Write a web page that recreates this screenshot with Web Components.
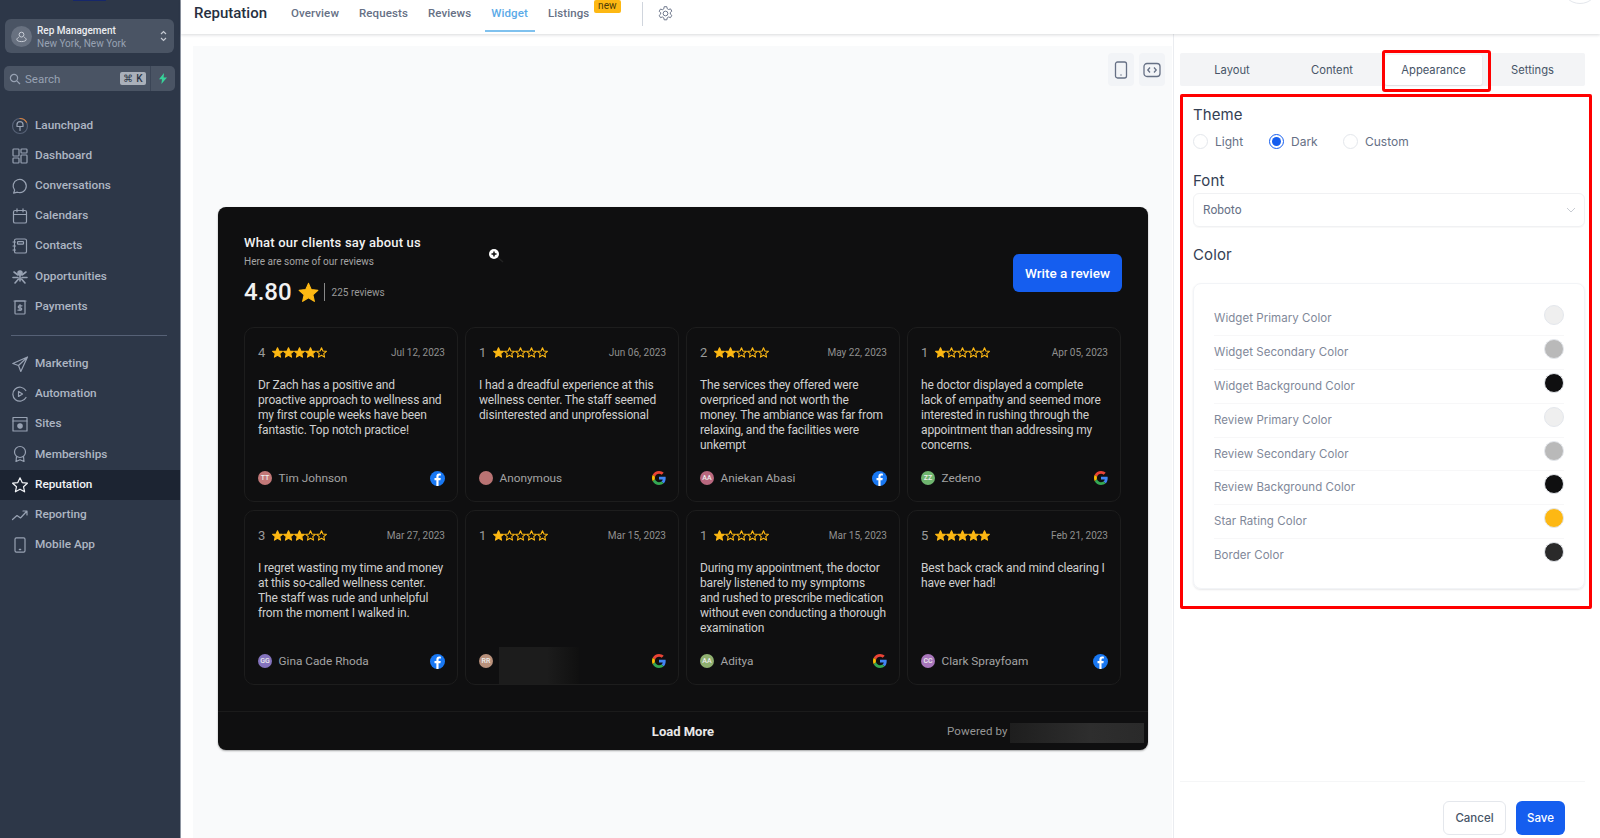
<!DOCTYPE html>
<html>
<head>
<meta charset="utf-8">
<title>Reputation</title>
<style>
  html, body { margin: 0; height: 100%; overflow: hidden; background: #fff; }
  body { font-family: Roboto, "Liberation Sans", sans-serif; }
</style>
</head>
<body>
<rep-app></rep-app>
<script>
const ICONS = {
  launchpad: '<circle cx="9" cy="9" r="7.5" stroke="#566176"/><path d="M9 1.5a7.5 7.5 0 0 1 6.5 3.7" stroke="#d9803c"/><path d="M6 9.5V7.6a3 3 0 0 1 6 0v1.9zM9 9.5v4" />',
  dashboard: '<rect x="2" y="2" width="6" height="7" rx=".8"/><rect x="10" y="2" width="6" height="4" rx=".8"/><rect x="2" y="11" width="6" height="5" rx=".8"/><rect x="10" y="8" width="6" height="8" rx=".8" />',
  chat: '<path d="M3.6 13.2A6.6 6.6 0 1 1 6.4 15.2L2.6 16.2z"/>',
  calendar: '<rect x="2.5" y="3.5" width="13" height="12.5" rx="1.6"/><path d="M2.5 7.5h13M6 1.8v3M12 1.8v3"/>',
  contacts: '<rect x="3.5" y="2" width="12" height="14" rx="1.6"/><rect x="6.5" y="4.6" width="6" height="2.6" rx=".6"/><path d="M2 5h2.5M2 9h2.5M2 13h2.5"/>',
  opportunities: '<circle cx="9" cy="5" r="2.2" fill="currentColor"/><path d="M9 7v6M3 4l4 3M15 4l-4 3M2 9.5h5M16 9.5h-5M4 15l3.5-4M14 15l-3.500-4" stroke-width="1.6"/>',
  payments: '<rect x="4" y="3" width="10" height="13" rx=".8"/><path d="M3 3h12M9 6.500v6M11 7.800H8a1.200 1.200 0 0 0 0 2.200h2a1.200 1.200 0 0 1 0 2.200H7"/>',
  marketing: '<path d="M16.500 2 1.800 8.500l5.700 2 2.300 6zM7.500 10.500 16.500 2"/>',
  automation: '<path d="M14.800 5.500A7 7 0 1 0 15 12.500"/><path d="M7.500 6.500v5l4-2.500z"/>',
  sites: '<rect x="2" y="2.500" width="14" height="13.500"/><path d="M2 6h14"/><circle cx="9" cy="11" r="2.200" fill="currentColor"/>',
  memberships: '<circle cx="9" cy="7" r="5.500"/><path d="M5.500 11.500 5 16.500l4-1.800 4 1.800-.5-5"/>',
  star: '<path d="M9 1.800 11.200 6.600l5.200.6-3.900 3.500 1.100 5.100L9 13.200l-4.600 2.600 1.100-5.100-3.900-3.500 5.200-.6z"/>',
  reporting: '<path d="M1.500 13.500 6 9.500 9.500 12 15.500 5.500M12 5h4v4"/>',
  mobile: '<rect x="4" y="1.800" width="10" height="14.400" rx="1.400"/><path d="M8.500 13.500h1" stroke-width="1.600"/>'
};

function svgIcon(name, size) {
  return `<svg width="${size}" height="${size}" viewBox="0 0 18 18" fill="none" stroke="currentColor" stroke-width="1.2" stroke-linecap="round" stroke-linejoin="round">${ICONS[name]}</svg>`;
}

class NavItem extends HTMLElement {
  connectedCallback() {
    const active = this.hasAttribute('active');
    this.attachShadow({ mode: 'open' }).innerHTML = `
      <style>
        :host { display: flex; align-items: center; height: 30.2px; padding-left: 11px; gap: 6px;
          color: ${active ? '#f2f4f7' : '#aeb6c3'}; background: ${active ? '#1c2432' : 'transparent'};
          font: 500 11.8px/1 Roboto, sans-serif; }
        svg { flex: none; color: ${active ? '#f2f4f7' : '#98a2b3'}; }
      </style>
      ${svgIcon(this.getAttribute('icon'), 18)}<slot></slot>`;
  }
}
customElements.define('nav-item', NavItem);

class RepSidebar extends HTMLElement {
  connectedCallback() {
    this.attachShadow({ mode: 'open' }).innerHTML = `
      <style>
        :host { display: flex; flex-direction: column; width: 181px; flex: none; background: #2d3748;
          border-right: 1px solid #8e95a1; box-sizing: border-box; position: relative; color: #fff; }
        .sliver { position: absolute; left: 73px; top: 0; width: 33px; height: 1px; background: #16276b; }
        .loc { margin: 19px 6px 0 5px; height: 34px; border-radius: 6px; background: #4a5464; display: flex; align-items: center; padding: 0 6px; gap: 5px; }
        .loc-av { width: 21px; height: 21px; border-radius: 50%; background: #687180; display: grid; place-items: center; flex: none; color: #d0d5dd; }
        .loc-txt { flex: 1; font-size: 10px; line-height: 13px; padding-top: 2px; }
        .loc-txt b { display: block; font-weight: 500; color: #eaecf0; }
        .loc-txt span { color: #98a2b3; }
        .search-row { display: flex; margin: 13px 5px 0 4px; height: 25px; }
        .search { flex: 1; background: #4a5464; border-radius: 5px 0 0 5px; display: flex; align-items: center; padding: 0 4px 0 5px; gap: 4px; color: #98a2b3; font-size: 11.5px; }
        .search span { flex: 1; }
        .kbd { background: #aab0ba; color: #2d3748; border-radius: 2px; font-size: 10px; font-weight: 500; padding: 1px 3px; height: 11px; line-height: 11px; letter-spacing: .5px; }
        .spark { width: 25px; background: #4a5464; border-radius: 0 5px 5px 0; border-left: 1px solid #3b4556; box-sizing: border-box; display: grid; place-items: center; }
        nav { margin-top: 19.5px; }
        hr { margin: 13px 13px 13px 11px; border: 0; border-top: 1px solid #566176; }
      </style>
      <div class="sliver"></div>
      <div class="loc">
        <div class="loc-av"><svg width="13" height="13" viewBox="0 0 14 14" fill="none" stroke="currentColor" stroke-width="1"><circle cx="7" cy="5" r="2.600"/><path d="M4 7.800C2.600 8.500 2 9.500 2 10.500c0 1 2.200 2 5 2s5-1 5-2c0-1-.6-2-2-2.700"/></svg></div>
        <div class="loc-txt"><b>Rep Management</b><span>New York, New York</span></div>
        <svg width="9" height="14" viewBox="0 0 9 14" fill="none" stroke="#c5cad3" stroke-width="1.200"><path d="M2 5l2.500-2.500L7 5M2 9l2.500 2.500L7 9"/></svg>
      </div>
      <div class="search-row">
        <div class="search">
          <svg width="12" height="12" viewBox="0 0 12 12" fill="none" stroke="currentColor" stroke-width="1.200"><circle cx="5" cy="5" r="3.600"/><path d="M7.800 7.800 11 11"/></svg>
          <span>Search</span><div class="kbd">⌘ K</div>
        </div>
        <div class="spark"><svg width="10" height="11" viewBox="0 0 10 11"><path d="M6 0 1 6.200h3L3.400 11 9 4.500H5.600z" fill="#37d39a"/></svg></div>
      </div>
      <nav>
        <nav-item icon="launchpad">Launchpad</nav-item>
        <nav-item icon="dashboard">Dashboard</nav-item>
        <nav-item icon="chat">Conversations</nav-item>
        <nav-item icon="calendar">Calendars</nav-item>
        <nav-item icon="contacts">Contacts</nav-item>
        <nav-item icon="opportunities">Opportunities</nav-item>
        <nav-item icon="payments">Payments</nav-item>
        <hr>
        <nav-item icon="marketing">Marketing</nav-item>
        <nav-item icon="automation">Automation</nav-item>
        <nav-item icon="sites">Sites</nav-item>
        <nav-item icon="memberships">Memberships</nav-item>
        <nav-item icon="star" active>Reputation</nav-item>
        <nav-item icon="reporting">Reporting</nav-item>
        <nav-item icon="mobile">Mobile App</nav-item>
      </nav>`;
  }
}
customElements.define('rep-sidebar', RepSidebar);

class TopBar extends HTMLElement {
  connectedCallback() {
    this.attachShadow({ mode: 'open' }).innerHTML = `
      <style>
        :host { display: flex; align-items: flex-start; height: 34px; flex: none; background: #fff; position: relative;
          box-shadow: 0 1px 3px rgba(16,24,40,.16); padding-left: 13px; box-sizing: border-box; z-index: 2; }
        h1 { margin: 4px 0 0; font: 500 15px/18px Roboto, sans-serif; color: #27303f; width: 77px; }
        a { position: relative; font: 500 11.5px/14px Roboto, sans-serif; color: #667085; padding-top: 6px; height: 25px; margin-left: 20px; letter-spacing: .1px; }
        a.on { color: #5aaae8; }
        a.on::after { content: ''; position: absolute; left: -6px; right: -7px; bottom: -1px; height: 2px; background: #7fc1ee; }
        .badge { position: absolute; left: 46px; top: 0; width: 27px; height: 13px; border-radius: 2px; background: #fdb813; color: #4a3a08; font: 400 10px/11px Roboto, sans-serif; text-align: center; }
        .sep { width: 1px; height: 24px; background: #d0d5dd; margin: 2px 0 0 53px; }
        svg { margin: 5px 0 0 14px; color: #667085; }
        .me { position: absolute; right: 1px; top: -34px; width: 38px; height: 38px; border-radius: 50%; border: 1px solid #e4e7ec; background: #fff; box-sizing: border-box; }
      </style>
      <h1>Reputation</h1>
      <a>Overview</a><a>Requests</a><a>Reviews</a><a class="on">Widget</a>
      <a>Listings<span class="badge">new</span></a>
      <div class="sep"></div>
      <svg width="17" height="17" viewBox="0 0 18 18" fill="none" stroke="currentColor" stroke-width="1"><circle cx="9" cy="9" r="2.500"/><path d="M7.600 1.800h2.800l.4 2.100 1.500.9 2-.7 1.400 2.400-1.600 1.400v1.700l1.600 1.400-1.400 2.400-2-.7-1.500.9-.4 2.100H7.600l-.4-2.100-1.500-.9-2 .7-1.400-2.400 1.600-1.400V8.100L2.300 6.700l1.400-2.400 2 .7 1.500-.9z" stroke-linejoin="round"/></svg>
      <div class="me"></div>`;
  }
}
customElements.define('top-bar', TopBar);

class StarRating extends HTMLElement {
  connectedCallback() {
    const n = +this.getAttribute('value');
    let stars = '';
    for (let i = 0; i < 5; i++) {
      const fill = i < n ? '#fdb813' : 'none';
      stars += `<svg width="11" height="11" viewBox="0 0 18 18"><path d="M9 1.200 11.300 6.500l5.700.6-4.300 3.800 1.300 5.700L9 13.600l-5 3 1.300-5.700L1 7.100l5.700-.6z" fill="${fill}" stroke="#fdb813" stroke-width="1.800" stroke-linejoin="round"/></svg>`;
    }
    this.attachShadow({ mode: 'open' }).innerHTML = `
      <style>:host { display: inline-flex; width: 54px; } svg { flex: none; }</style>${stars}`;
  }
}
customElements.define('star-rating', StarRating);

const FB = '<svg width="15" height="15" viewBox="0 0 16 16"><circle cx="8" cy="8" r="8" fill="#1877f2"/><path d="M9.100 16V9.900h2l.4-2.400H9.100V6.100c0-.7.3-1.200 1.300-1.200h1.200V2.800c-.5-.1-1.100-.2-1.800-.2-1.900 0-3 1.100-3 3.100v1.800h-2v2.400h2V16z" fill="#fff"/></svg>';
const GOOGLE = '<svg width="14" height="14" viewBox="0 0 48 48"><path fill="#ea4335" d="M24 9.500c3.500 0 6.700 1.200 9.200 3.600l6.900-6.900C35.900 2.400 30.500 0 24 0 14.600 0 6.500 5.400 2.600 13.200l8 6.200C12.500 13.700 17.800 9.500 24 9.500z"/><path fill="#4285f4" d="M46.900 24.500c0-1.600-.1-3.100-.4-4.500H24v9h12.900c-.6 3-2.200 5.500-4.700 7.200l7.700 6c4.500-4.200 7-10.300 7-17.700z"/><path fill="#fbbc05" d="M10.500 28.600c-.5-1.400-.8-3-.8-4.600s.3-3.200.8-4.600l-8-6.200C.9 16.500 0 20.100 0 24s.9 7.500 2.600 10.800z"/><path fill="#34a853" d="M24 48c6.500 0 11.900-2.100 15.900-5.800l-7.700-6c-2.200 1.400-4.900 2.300-8.200 2.300-6.200 0-11.500-4.200-13.400-9.900l-8 6.200C6.500 42.600 14.600 48 24 48z"/></svg>';

class ReviewCard extends HTMLElement {
  connectedCallback() {
    const a = (k) => this.getAttribute(k) || '';
    const name = a('redacted') ? '<div class="redact"></div>' : `<span class="name">${a('name')}</span>`;
    this.attachShadow({ mode: 'open' }).innerHTML = `
      <style>
        :host { display: flex; flex-direction: column; border: 1px solid #1d1d1d; border-radius: 10px; padding: 0 12px 0 13px; box-sizing: border-box; height: 175px; background: #0f0f10; position: relative; }
        .head { display: flex; align-items: center; height: 17px; margin-top: 16px; }
        .num { font-size: 13px; color: #9a9a9a; width: 14px; }
        .date { margin-left: auto; font-size: 10px; color: #8f8f8f; }
        .body { flex: 1; width: 187px; margin-top: 17px; font-size: 12px; line-height: 15.100px; color: #cfcfcf; letter-spacing: -.15px; }
        .foot { display: flex; align-items: center; height: 16px; margin-bottom: 15px; gap: 6.5px; }
        .av { width: 14px; height: 14px; border-radius: 50%; background: ${a('color')}; color: #eee; font: 500 7px/14px Roboto, sans-serif; text-align: center; flex: none; }
        .name { font-size: 11.8px; color: #a3a3a3; }
        .src { margin-left: auto; display: flex; }
        .redact { position: absolute; left: 33px; top: 136px; width: 80px; height: 37px; background: linear-gradient(90deg, #1c1c1c 60%, #101010); }
      </style>
      <div class="head"><span class="num">${a('rating')}</span><star-rating value="${a('rating')}"></star-rating><span class="date">${a('date')}</span></div>
      <div class="body"><slot></slot></div>
      <div class="foot"><div class="av">${a('initials')}</div>${name}<span class="src">${a('source') === 'fb' ? FB : GOOGLE}</span></div>`;
  }
}
customElements.define('review-card', ReviewCard);

class ReviewWidget extends HTMLElement {
  connectedCallback() {
    this.attachShadow({ mode: 'open' }).innerHTML = `
      <style>
        :host { display: block; width: 930px; height: 543px; background: #0f0f10; border-radius: 8px; color: #eee; position: relative;
          box-shadow: 0 1px 2px rgba(0,0,0,.35); overflow: hidden; box-sizing: border-box; }
        header { display: flex; justify-content: space-between; align-items: flex-start; padding: 28px 26px 0; height: 120px; box-sizing: border-box; }
        h2 { margin: 0; font: 500 13px/16px Roboto, sans-serif; color: #f2f2f2; letter-spacing: .2px; }
        .sub { font-size: 10px; line-height: 12px; color: #a5a5a5; margin-top: 5px; }
        .score { display: flex; align-items: center; margin-top: 11px; height: 26px; }
        .score b { font: 500 24px/26px Roboto, sans-serif; color: #f2f2f2; }
        .score svg { margin-left: 6px; }
        .score i { display: block; width: 1px; height: 18px; background: #888; margin: 0 7px 0 5px; }
        .score span { font-size: 10px; color: #9a9a9a; }
        button { margin-top: 19px; width: 109px; height: 38px; border: 0; border-radius: 6px; background: #155eef; color: #fff; font: 500 13.500px Roboto, sans-serif; }
        .grid { display: grid; grid-template-columns: repeat(4, 214px); gap: 8px 7px; padding: 0 26px; }
        footer { position: absolute; left: 0; right: 0; bottom: 0; height: 38px; border-top: 1px solid #1b1b1b; display: grid; place-items: center; }
        footer b { font: 700 13px Roboto, sans-serif; color: #e8e8e8; }
        .pow { position: absolute; left: 729px; top: 12px; font-size: 11.500px; color: #979797; white-space: nowrap; letter-spacing: .1px; }
        .hide { position: absolute; left: 792px; top: 11px; width: 134px; height: 20px; background: linear-gradient(90deg, #1e1e1e, #2e2e2e 60%, #2a2a2a); }
      </style>
      <header>
        <div>
          <h2>What our clients say about us</h2>
          <div class="sub">Here are some of our reviews</div>
          <div class="score"><b>4.80</b>
            <svg width="21" height="21" viewBox="0 0 18 18"><path d="M9 1.200 11.300 6.500l5.700.6-4.300 3.800 1.300 5.700L9 13.600l-5 3 1.300-5.700L1 7.100l5.700-.6z" fill="#fdb813" stroke="#fdb813" stroke-linejoin="round"/></svg>
            <i></i><span>225 reviews</span></div>
        </div>
        <button>Write a review</button>
      </header>
      <div class="grid"><slot></slot></div>
      <footer><b>Load More</b><span class="pow">Powered by</span><div class="hide"></div></footer>`;
  }
}
customElements.define('review-widget', ReviewWidget);

class PreviewPane extends HTMLElement {
  connectedCallback() {
    this.attachShadow({ mode: 'open' }).innerHTML = `
      <style>
        :host { display: flex; flex-direction: column; flex: 1; margin: 12px 1px 0 12px; background: #f9fafb; min-width: 0; position: relative; }
        .tools { display: flex; justify-content: flex-end; gap: 5px; padding: 7px 7px 0 0; }
        .tool { width: 26px; height: 33px; background: #f2f4f7; border-radius: 4px; display: grid; place-items: center; color: #667085; }
        .stage { margin: 121px 0 0 25px; position: relative; }
        .cursor { position: absolute; left: 270px; top: 41px; z-index: 3; }
      </style>
      <div class="tools">
        <div class="tool"><svg width="14" height="18" viewBox="0 0 14 18" fill="none" stroke="currentColor" stroke-width="1.300"><rect x="1.500" y="1" width="11" height="16" rx="2"/><path d="M6.500 14h1" stroke-width="1.600"/></svg></div>
        <div class="tool"><svg width="18" height="16" viewBox="0 0 18 16" fill="none" stroke="currentColor" stroke-width="1.300"><rect x="1" y="1.500" width="16" height="13" rx="3"/><path d="M7 5.500 4.800 8 7 10.500M11 5.500 13.200 8 11 10.500"/></svg></div>
      </div>
      <div class="stage">
        <slot></slot>
        <svg class="cursor" width="16" height="16" viewBox="0 0 16 16"><path d="M8 8l7 6" stroke="#222" stroke-width="1.500"/><circle cx="6" cy="6" r="5" fill="#fff"/><path d="M6 3.500v5M3.500 6h5" stroke="#111" stroke-width="1.500"/></svg>
      </div>`;
  }
}
customElements.define('preview-pane', PreviewPane);

class ColorRow extends HTMLElement {
  connectedCallback() {
    const last = this.hasAttribute('last');
    this.attachShadow({ mode: 'open' }).innerHTML = `
      <style>
        :host { display: flex; justify-content: space-between; height: 33.9px; box-sizing: border-box; ${last ? '' : 'border-bottom: 1px solid #f7f7f8;'} font: 400 11.500px/1 Inter, sans-serif; color: #7f8899; letter-spacing: .05px; }
        span { padding-top: 11px; }
        i { display: block; width: 20px; height: 20px; border-radius: 50%; margin-top: 3px; background: ${this.getAttribute('color')}; border: 1px solid #e4e7ec; box-sizing: border-box; }
      </style>
      <span><slot></slot></span><i></i>`;
  }
}
customElements.define('color-row', ColorRow);

class RadioItem extends HTMLElement {
  connectedCallback() {
    const on = this.hasAttribute('checked');
    this.attachShadow({ mode: 'open' }).innerHTML = `
      <style>
        :host { display: inline-flex; align-items: center; gap: 7px; font: 400 12px/1 Inter, sans-serif; color: #667085; }
        i { width: 15px; height: 15px; border-radius: 50%; box-sizing: border-box; border: 1px solid ${on ? '#155eef' : '#e4e7ec'}; display: grid; place-items: center; background: #fff; }
        i::after { content: ''; width: 9px; height: 9px; border-radius: 50%; background: ${on ? '#155eef' : 'transparent'}; }
      </style>
      <i></i><slot></slot>`;
  }
}
customElements.define('radio-item', RadioItem);

class SettingsPanel extends HTMLElement {
  connectedCallback() {
    this.attachShadow({ mode: 'open' }).innerHTML = `
      <style>
        :host { display: flex; flex-direction: column; width: 427px; flex: none; border-left: 1px solid #eaecf0; box-sizing: border-box; padding: 19px 8px 0 6px; font-family: Inter, sans-serif; height: 804px; position: relative; background: #fff; }
        .tabs { display: grid; grid-template-columns: 104px 100px 104px 97px; width: 405px; height: 33px; background: #f3f4f6; border-radius: 2px; font-size: 11.200px; color: #475467; text-align: center; line-height: 34px; }
        .tabs div { position: relative; }
        .tabs div:nth-child(2) { padding-right: 4px; }
        .tabs div:nth-child(4) { padding-right: 8px; }
        .tabs .on { background: #fff; margin: 2px 6px 2px 1px; line-height: 30px; box-shadow: 0 1px 2px rgba(16,24,40,.1); border-radius: 2px; }
        .mark { position: absolute; left: -3px; right: -9px; top: -5px; bottom: -7px; border: 3px solid #f00; border-radius: 3px; }
        .box { margin-top: 8px; border: 3px solid #f00; border-radius: 2px; height: 515px; box-sizing: border-box; padding: 8px 0 0 10px; }
        .inner { width: 392px; }
        h3 { margin: 0; font: 400 15px/20px Inter, sans-serif; color: #344054; letter-spacing: .1px; }
        .radios { display: flex; margin-top: 8px; height: 17px; }
        .radios radio-item:nth-child(1) { width: 76px; } .radios radio-item:nth-child(2) { width: 74px; }
        .select { margin-top: 2px; height: 32px; border: 1px solid #f0f1f3; border-radius: 6px; display: flex; align-items: center; justify-content: space-between; padding: 0 8px 0 9px; font: 400 12px Roboto, sans-serif; color: #667085; box-shadow: 0 1px 1px rgba(16,24,40,.03); }
        .card { margin-top: 18px; height: 306px; border: 1px solid #f2f4f7; border-radius: 8px; box-sizing: border-box; padding: 18px 20px 0; box-shadow: 0 1px 2px rgba(16,24,40,.1); }
        .actions { margin-top: 172px; width: 405px; border-top: 1px solid #f5f6f7; display: flex; justify-content: flex-end; gap: 10px; padding: 19px 20px 0 0; box-sizing: border-box; }
        button { height: 34px; border-radius: 6px; font: 500 11.500px Inter, sans-serif; }
        .cancel { width: 63px; background: #fff; border: 1px solid #e4e7ec; color: #475467; }
        .save { width: 49px; background: #155eef; border: 0; color: #fff; }
      </style>
      <div class="tabs">
        <div>Layout</div><div>Content</div><div class="on">Appearance<span class="mark"></span></div><div>Settings</div>
      </div>
      <div class="box"><div class="inner">
        <h3>Theme</h3>
        <div class="radios"><radio-item>Light</radio-item><radio-item checked>Dark</radio-item><radio-item>Custom</radio-item></div>
        <h3 style="margin-top:21px">Font</h3>
        <div class="select">Roboto<svg width="10" height="6" viewBox="0 0 10 6" fill="none" stroke="#c8ccd3"><path d="M1 1l4 4 4-4"/></svg></div>
        <h3 style="margin-top:18px">Color</h3>
        <div class="card">
          <color-row color="#efefef">Widget Primary Color</color-row>
          <color-row color="#b9b9b9">Widget Secondary Color</color-row>
          <color-row color="#0f0f10">Widget Background Color</color-row>
          <color-row color="#efefef">Review Primary Color</color-row>
          <color-row color="#b9b9b9">Review Secondary Color</color-row>
          <color-row color="#0f0f10">Review Background Color</color-row>
          <color-row color="#fdb813">Star Rating Color</color-row>
          <color-row color="#2a2a2a" last>Border Color</color-row>
        </div>
      </div></div>
      <div class="actions"><button class="cancel">Cancel</button><button class="save">Save</button></div>`;
  }
}
customElements.define('settings-panel', SettingsPanel);

class RepApp extends HTMLElement {
  connectedCallback() {
    this.attachShadow({ mode: 'open' }).innerHTML = `
      <style>
        :host { display: flex; width: 1600px; height: 838px; overflow: hidden; font-family: Roboto, "Liberation Sans", sans-serif; }
        main { flex: 1; display: flex; flex-direction: column; min-width: 0; }
        .row { display: flex; flex: 1; min-height: 0; }
      </style>
      <rep-sidebar></rep-sidebar>
      <main>
        <top-bar></top-bar>
        <div class="row">
          <preview-pane>
            <review-widget>
              <review-card rating="4" date="Jul 12, 2023" name="Tim Johnson" initials="TT" color="#c27878" source="fb">Dr Zach has a positive and proactive approach to wellness and my first couple weeks have been fantastic. Top notch practice!</review-card>
              <review-card rating="1" date="Jun 06, 2023" name="Anonymous" color="#b97373" source="g">I had a dreadful experience at this wellness center. The staff seemed disinterested and unprofessional</review-card>
              <review-card rating="2" date="May 22, 2023" name="Aniekan Abasi" initials="AA" color="#b9687f" source="fb">The services they offered were overpriced and not worth the money. The ambiance was far from relaxing, and the facilities were unkempt</review-card>
              <review-card rating="1" date="Apr 05, 2023" name="Zedeno" initials="ZZ" color="#6fb56f" source="g">he doctor displayed a complete<br>lack of empathy and seemed more interested in rushing through the appointment than addressing my concerns.</review-card>
              <review-card rating="3" date="Mar 27, 2023" name="Gina Cade Rhoda" initials="GG" color="#8473bd" source="fb">I regret wasting my time and money at this so-called wellness center. The staff was rude and unhelpful from the moment I walked in.</review-card>
              <review-card rating="1" date="Mar 15, 2023" initials="RR" color="#b8917c" source="g" redacted="1"></review-card>
              <review-card rating="1" date="Mar 15, 2023" name="Aditya" initials="AA" color="#8fb070" source="g">During my appointment, the doctor barely listened to my symptoms and rushed to prescribe medication without even conducting a thorough examination</review-card>
              <review-card rating="5" date="Feb 21, 2023" name="Clark Sprayfoam" initials="CC" color="#a876bb" source="fb">Best back crack and mind clearing I have ever had!</review-card>
            </review-widget>
          </preview-pane>
          <settings-panel></settings-panel>
        </div>
      </main>`;
  }
}
customElements.define('rep-app', RepApp);
</script>
</body>
</html>
